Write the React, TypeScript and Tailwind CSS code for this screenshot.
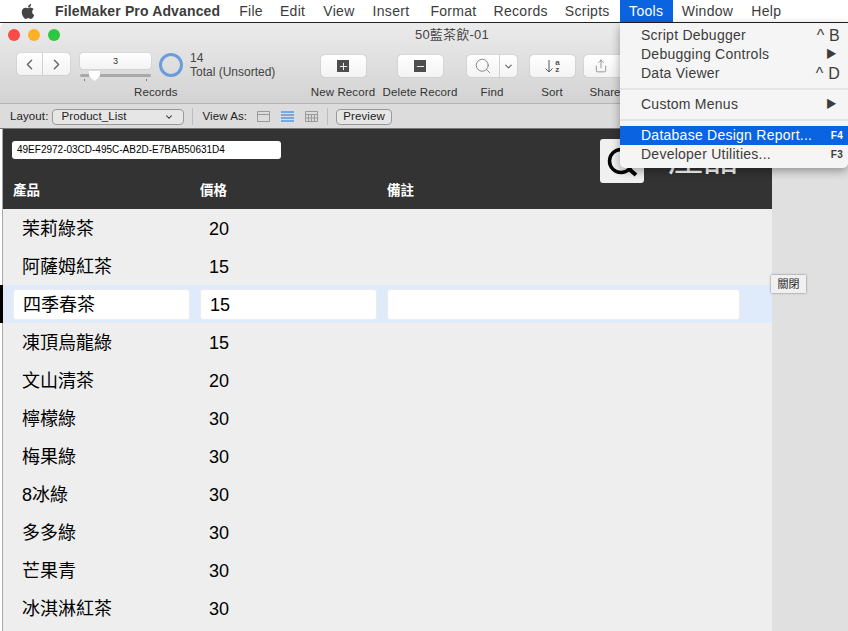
import { ChevronDown, ChevronLeft, ChevronRight, Minus, Plus, Search, Share } from 'lucide-react';
import { FaApple } from 'react-icons/fa';

const menus = [
  { label: 'File', className: 'ml-[19px]' },
  { label: 'Edit', className: 'ml-[17px]' },
  { label: 'View', className: 'ml-[18px]' },
  { label: 'Insert', className: 'ml-[18px]' },
  { label: 'Format', className: 'ml-[21px]' },
  { label: 'Records', className: 'ml-[17px]' },
  { label: 'Scripts', className: 'ml-[17px]' },
];

const rows = [
  ['茉莉綠茶', '20'],
  ['阿薩姆紅茶', '15'],
  ['四季春茶', '15'],
  ['凍頂烏龍綠', '15'],
  ['文山清茶', '20'],
  ['檸檬綠', '30'],
  ['梅果綠', '30'],
  ['8冰綠', '30'],
  ['多多綠', '30'],
  ['芒果青', '30'],
  ['冰淇淋紅茶', '30'],
];

function ToolGroup({ label, width, children }: { label: string; width: string; children: React.ReactNode }) {
  return (
    <div className={`flex flex-col items-center ${width}`}>
      <div className="h-[22px] mt-[8px] flex items-center">{children}</div>
      <div className="mt-[8px] text-[11.5px] tracking-[0.1px] leading-[14px] text-[#333] whitespace-nowrap">{label}</div>
    </div>
  );
}

function MenuItem({ label, shortcut, active, small, arrow }: { label: string; shortcut?: string; active?: boolean; small?: boolean; arrow?: boolean }) {
  return (
    <div className={`h-[19px] pl-[21px] pr-[5px] flex items-center justify-between text-[14px] tracking-[0.25px] ${active ? 'bg-[#0a63e0] text-white' : 'text-[#3c3c3c]'}`}>
      <span>{label}</span>
      {shortcut && !arrow && (
        <span className={small ? 'text-[10px] font-bold' : 'text-[16px] pr-[3px]'}>{shortcut}</span>
      )}
      {arrow && <span className="text-[11px] pr-[6px]">▶</span>}
    </div>
  );
}

export default function App() {
  return (
    <div className="relative w-[848px] h-[631px] overflow-hidden bg-white flex flex-col font-['Liberation_Sans','Noto_Sans_CJK_TC',sans-serif]">
      {/* menu bar */}
      <div className="h-[23px] shrink-0 flex items-center bg-white border-b border-[#222] text-[14px] tracking-[0.3px] text-[#3c3c3c]">
        <FaApple className="ml-[20px] w-[16px] h-[17px] text-[#444]" />
        <span className="ml-[19px] font-bold tracking-[0.14px]">FileMaker Pro Advanced</span>
        {menus.map((m) => (
          <span key={m.label} className={m.className}>{m.label}</span>
        ))}
        <span className="ml-[10px] h-[22px] w-[53px] flex items-center justify-center bg-[#0a63e0] text-white">Tools</span>
        <span className="ml-[9px]">Window</span>
        <span className="ml-[18px]">Help</span>
      </div>

      {/* title bar + toolbar */}
      <div className="h-[81px] shrink-0 bg-gradient-to-b from-[#ebebeb] to-[#d3d3d3] border-b border-[#b4b4b4] rounded-tl-[5px]">
        <div className="h-[24px] flex items-center">
          <div className="flex items-center gap-[8px] ml-[8px]">
            <span className="w-[12px] h-[12px] rounded-full bg-[#fc4b47]" />
            <span className="w-[12px] h-[12px] rounded-full bg-[#fdb225]" />
            <span className="w-[12px] h-[12px] rounded-full bg-[#2ac940]" />
          </div>
          <span className="ml-[355px] text-[13px] tracking-[0.2px] text-[#444]">50藍茶飲-01</span>
        </div>
        <div className="flex pl-[17px]">
          {/* records */}
          <div className="w-[287.5px] flex flex-col">
            <div className="h-[38px] flex items-start">
              <div className="mt-[6px] w-[53px] h-[22px] flex bg-gradient-to-b from-white to-[#f3f3f3] rounded-[4px] shadow-[0_0_1px_rgba(0,0,0,0.45)] text-[#666]">
                <span className="w-[26px] flex items-center justify-center border-r border-[#d0d0d0]">
                  <ChevronLeft className="w-[17px] h-[17px]" strokeWidth={2} />
                </span>
                <span className="flex-1 flex items-center justify-center">
                  <ChevronRight className="w-[17px] h-[17px]" strokeWidth={2} />
                </span>
              </div>
              <div className="ml-[10px] mt-[6px] w-[71px]">
                <div className="h-[16px] bg-gradient-to-b from-white to-[#f3f3f3] rounded-[3px] shadow-[0_0_1px_rgba(0,0,0,0.45)] text-[9px] leading-[16px] text-center text-[#333]">3</div>
                <div className="relative mt-[5px] h-[3px] bg-[#a9a9a9] rounded-full">
                  <span className="absolute left-[9px] top-[-3px] w-[11px] h-[10px] bg-white [clip-path:polygon(0_0,100%_0,100%_50%,50%_100%,0_50%)]" />
                  <span className="absolute left-[4px] top-[5px] w-px h-[2px] bg-[#777]" />
                  <span className="absolute left-[66px] top-[5px] w-px h-[2px] bg-[#777]" />
                </div>
              </div>
              <div className="ml-[8px] mt-[6px] w-[24px] h-[24px] rounded-full border-[3px] border-[#6b9cdc]" />
              <div className="ml-[7px] mt-[4px] text-[12px] leading-[14px] text-[#444]">
                <div>14</div>
                <div className="whitespace-nowrap">Total (Unsorted)</div>
              </div>
            </div>
            <div className="ml-[117px] text-[11.5px] tracking-[0.1px] leading-[14px] text-[#333]">Records</div>
          </div>
          <ToolGroup label="New Record" width="w-[77px]">
            <span className="w-[45px] h-[22px] flex items-center justify-center bg-gradient-to-b from-white to-[#f3f3f3] rounded-[4px] shadow-[0_0_1px_rgba(0,0,0,0.45)]">
              <span className="w-[12px] h-[12px] flex items-center justify-center bg-[#4d4d4d]">
                <Plus className="w-[11px] h-[11px] text-white" strokeWidth={2} />
              </span>
            </span>
          </ToolGroup>
          <ToolGroup label="Delete Record" width="w-[77px]">
            <span className="w-[45px] h-[22px] flex items-center justify-center bg-gradient-to-b from-white to-[#f3f3f3] rounded-[4px] shadow-[0_0_1px_rgba(0,0,0,0.45)]">
              <span className="w-[12px] h-[12px] flex items-center justify-center bg-[#4d4d4d]">
                <Minus className="w-[11px] h-[11px] text-white" strokeWidth={2} />
              </span>
            </span>
          </ToolGroup>
          <ToolGroup label="Find" width="w-[67px]">
            <span className="w-[50px] h-[22px] flex bg-gradient-to-b from-white to-[#f3f3f3] rounded-[4px] shadow-[0_0_1px_rgba(0,0,0,0.45)] text-[#666]">
              <span className="w-[33px] flex items-center justify-center border-r border-[#d0d0d0]">
                <Search className="w-[18px] h-[18px]" strokeWidth={1} />
              </span>
              <span className="flex-1 flex items-center justify-center">
                <ChevronDown className="w-[11px] h-[11px]" strokeWidth={2.5} />
              </span>
            </span>
          </ToolGroup>
          <ToolGroup label="Sort" width="w-[53px]">
            <span className="w-[45px] h-[22px] flex items-center justify-center bg-gradient-to-b from-white to-[#f3f3f3] rounded-[4px] shadow-[0_0_1px_rgba(0,0,0,0.45)]">
              <svg width="10" height="16" viewBox="0 0 10 16" fill="none" stroke="#555" strokeWidth="1">
                <path d="M5 2v12M1.5 10.5L5 14l3.5-3.5" />
              </svg>
              <span className="flex flex-col text-[8px] leading-[7px] font-bold text-[#555] ml-[1px]">
                <span>a</span>
                <span>z</span>
              </span>
            </span>
          </ToolGroup>
          <ToolGroup label="Share" width="w-[53px]">
            <span className="w-[42px] h-[22px] flex items-center pl-[10px] bg-gradient-to-b from-white to-[#f3f3f3] rounded-[4px] shadow-[0_0_1px_rgba(0,0,0,0.45)] text-[#555]">
              <Share className="w-[14px] h-[16px]" strokeWidth={1} />
            </span>
          </ToolGroup>
        </div>
      </div>

      {/* layout bar */}
      <div className="h-[25px] shrink-0 pt-[1px] flex items-center bg-[#dcdcdc] border-b border-[#777] pl-[10px] text-[11.5px] tracking-[0.1px] text-[#222]">
        <span>Layout:</span>
        <div className="ml-[4px] w-[132px] h-[16px] flex items-center justify-between pl-[8px] pr-[9px] border border-[#999] rounded-[4px] bg-[#e6e6e6]">
          <span>Product_List</span>
          <ChevronDown className="w-[10px] h-[10px]" strokeWidth={2.5} />
        </div>
        <span className="ml-[8px] w-px h-[17px] bg-[#bdbdbd]" />
        <span className="ml-[9px]">View As:</span>
        <div className="ml-[10px] flex items-center gap-[11px]">
          <svg width="13" height="11" viewBox="0 0 13 11" fill="none" stroke="#999">
            <path d="M.5.5h12v10H.5zM.5 3.5h12" />
          </svg>
          <svg width="13" height="11" viewBox="0 0 13 11" fill="none" stroke="#1f6fe0">
            <path d="M0 1h13M0 4h13M0 7h13M0 10h13" />
          </svg>
          <svg width="13" height="11" viewBox="0 0 13 11" fill="none" stroke="#999">
            <path d="M.5.5h12v10H.5zM.5 3.5h12M.5 7h12M3.5 3.5v7M6.5 3.5v7M9.5 3.5v7" />
          </svg>
        </div>
        <span className="ml-[9px] w-px h-[17px] bg-[#bdbdbd]" />
        <span className="ml-[8px] w-[56px] h-[16px] flex items-center justify-center border border-[#999] rounded-[4px] bg-[#e6e6e6]">Preview</span>
      </div>

      {/* body */}
      <div className="flex-1 min-h-0 flex bg-[#e0e0e0]">
        <div className="w-[3px] shrink-0 bg-white border-r border-[#aaa]" />
        <div className="w-[769px] shrink-0 flex flex-col">
          <div className="relative h-[80px] shrink-0 bg-[#333333] text-white">
            <div className="absolute left-[9px] top-[12px] w-[269px] h-[18px] pl-[5px] bg-white rounded-[3px] text-black text-[10px] leading-[18px]">
              49EF2972-03CD-495C-AB2D-E7BAB50631D4
            </div>
            <div className="absolute left-[597px] top-[10px] w-[44px] h-[44px] bg-[#f0f0f0] rounded-[3px]">
              <svg width="44" height="44" viewBox="0 0 44 44" fill="none" stroke="#000">
                <circle cx="21" cy="22" r="11.5" strokeWidth="3.5" />
                <path d="M29 30l7 6" strokeWidth="4" />
              </svg>
            </div>
            <div className="absolute left-[665px] top-[7px] text-[35px] leading-[40px] font-['Noto_Sans_CJK_TC',sans-serif]">產品</div>
            <div className="absolute left-0 bottom-0 w-full h-[36px] flex items-center text-[13.5px] font-bold">
              <span className="w-[197px] pl-[10px]">產品</span>
              <span className="w-[187px]">價格</span>
              <span>備註</span>
            </div>
          </div>
          <div className="flex-1 bg-[#eeeeee]">
            {rows.map(([name, price], i) =>
              i === 2 ? (
                <div key={name} className="relative h-[38px] flex items-center bg-[#dfeafb] pl-[10px] gap-[10px] text-[18px] text-black">
                  <span className="absolute left-[-3px] top-0 w-[3px] h-full bg-black" />
                  <span className="w-[177px] h-[31px] pl-[9px] leading-[31px] bg-white rounded-[3px] border border-[#ececec]">{name}</span>
                  <span className="w-[177px] h-[31px] pl-[9px] leading-[31px] bg-white rounded-[3px] border border-[#ececec]">{price}</span>
                  <span className="w-[353px] h-[31px] bg-white rounded-[3px] border border-[#ececec]" />
                </div>
              ) : (
                <div key={name} className="h-[38px] pt-[2px] flex items-center text-[18px] text-black">
                  <span className="w-[206px] pl-[19px]">{name}</span>
                  <span>{price}</span>
                </div>
              )
            )}
          </div>
        </div>
      </div>

      {/* close tooltip button */}
      <div className="absolute left-[771px] top-[275px] w-[35px] h-[18px] bg-[#f0f0f0] shadow-[0_0_2px_rgba(0,0,0,0.5)] text-[11px] leading-[18px] text-center text-[#222]">
        關閉
      </div>

      {/* open Tools menu */}
      <div className="absolute left-[620px] top-[23px] w-[228px] h-[145px] pt-[3px] bg-[#f5f5f5] rounded-b-[5px] shadow-[0_3px_10px_rgba(0,0,0,0.35)]">
        <MenuItem label="Script Debugger" shortcut="^ B" />
        <MenuItem label="Debugging Controls" arrow shortcut="▶" />
        <MenuItem label="Data Viewer" shortcut="^ D" />
        <div className="mt-[5px] mb-[5px] h-[2px] bg-[#e4e4e4]" />
        <MenuItem label="Custom Menus" arrow shortcut="▶" />
        <div className="mt-[5px] mb-[5px] h-[2px] bg-[#e4e4e4]" />
        <MenuItem label="Database Design Report..." shortcut="F4" active small />
        <MenuItem label="Developer Utilities..." shortcut="F3" small />
      </div>
    </div>
  );
}
